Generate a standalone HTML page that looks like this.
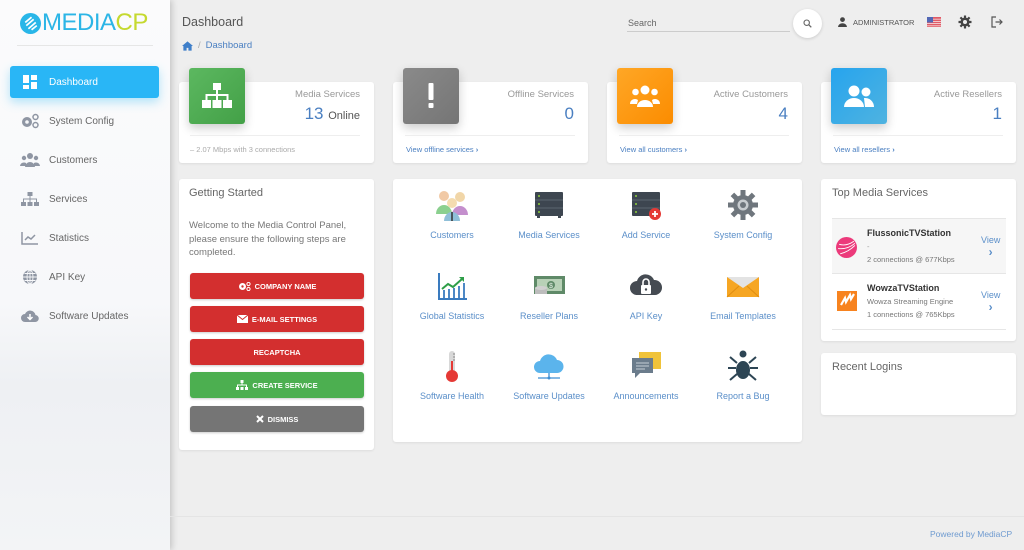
<!DOCTYPE html>
<html><head><meta charset="utf-8">
<style>
*{box-sizing:border-box;margin:0;padding:0}
body{width:1024px;height:550px;overflow:hidden;background:#eeeeee;font-family:"Liberation Sans",sans-serif;position:relative;color:#555}
.a{position:absolute}
.side{left:0;top:0;width:170px;height:550px;background:linear-gradient(180deg,#fbfbfc 0%,#f7f8fa 55%,#eef0f3 70%,#f3f4f6 100%);box-shadow:2px 0 6px rgba(0,0,0,.18)}
.nav{left:20px;font-size:10px;color:#666;display:flex;align-items:center}
.nav svg{width:20px;height:16px;margin-right:9px}
.card{background:#fff;border-radius:3px;box-shadow:0 1px 2px rgba(0,0,0,.08)}
.sq{width:56px;height:56px;border-radius:3px;box-shadow:0 4px 10px rgba(0,0,0,.2);display:flex;align-items:center;justify-content:center}
.lbl{font-size:9.5px;color:#999;text-align:right}
.num{font-size:17px;color:#4a7fc1;text-align:right}
.lnk{font-size:7.5px;color:#4a7fc1}
.hr{height:1px;background:#eee}
.btn{left:190px;width:174px;height:26px;border-radius:3px;color:#fff;font-size:7.5px;font-weight:bold;display:flex;align-items:center;justify-content:center;box-shadow:0 1px 2px rgba(0,0,0,.2)}
.red{background:#d32f2f}
.ic{width:102px;text-align:center;font-size:9px;color:#5b8fc9}
.ic svg{display:block;margin:0 auto 8px;width:34px;height:34px}
</style></head><body>
<div class="a side">
 <div class="a" style="left:20px;top:11px;display:flex;align-items:center">
  <svg width="21" height="21" viewBox="0 0 20 20"><circle cx="10" cy="10" r="10" fill="#29b6e8"/><path d="M5 9l6-5M6 12l7-6M8 15l7-6M11 16l5-4" stroke="#fff" stroke-width="1.6"/></svg>
  <span style="font-size:24px;letter-spacing:-0.5px;color:#2bb5e6;margin-left:1px;line-height:1">MEDIA<span style="color:#c5d92f">CP</span></span>
 </div>
 <div class="a" style="left:17px;top:45px;width:136px;height:1px;background:#e6e6e6"></div>
 <div class="a" style="left:10px;top:66px;width:149px;height:32px;background:#29b6f6;border-radius:3px;box-shadow:0 4px 10px rgba(41,182,246,.35)"></div>
 <div class="a nav" style="top:74px;color:#fff"><svg viewBox="0 0 20 16"><rect x="3" y="1" width="6" height="8" fill="#fff"/><rect x="11" y="1" width="6" height="5" fill="#fff"/><rect x="3" y="11" width="6" height="4" fill="#fff"/><rect x="11" y="8" width="6" height="7" fill="#fff"/></svg>Dashboard</div>
 <div class="a nav" style="top:113px"><svg viewBox="0 0 20 16"><circle cx="7" cy="9" r="5" fill="#8f96a3"/><circle cx="7" cy="9" r="1.8" fill="#f7f8fa"/><circle cx="15.5" cy="4" r="2.5" fill="none" stroke="#8f96a3" stroke-width="1.5"/><circle cx="15.5" cy="12" r="2.5" fill="none" stroke="#8f96a3" stroke-width="1.5"/></svg>System Config</div>
 <div class="a nav" style="top:152px"><svg viewBox="0 0 20 16"><circle cx="10" cy="4" r="3" fill="#8f96a3"/><circle cx="4" cy="6" r="2.2" fill="#8f96a3"/><circle cx="16" cy="6" r="2.2" fill="#8f96a3"/><path d="M5 15a5 5 0 0110 0z" fill="#8f96a3"/><path d="M0 14a4 4 0 016-3v3zM20 14a4 4 0 00-6-3v3z" fill="#8f96a3"/></svg>Customers</div>
 <div class="a nav" style="top:191px"><svg viewBox="0 0 20 16"><rect x="7.5" y="1" width="5" height="4" fill="#8f96a3"/><path d="M10 5v3M3.5 11V8h13v3M10 8v3" stroke="#8f96a3" fill="none"/><rect x="1" y="11" width="5" height="4" fill="#8f96a3"/><rect x="7.5" y="11" width="5" height="4" fill="#8f96a3"/><rect x="14" y="11" width="5" height="4" fill="#8f96a3"/></svg>Services</div>
 <div class="a nav" style="top:230px"><svg viewBox="0 0 20 16"><path d="M2 2v12h16" stroke="#8f96a3" stroke-width="1.5" fill="none"/><path d="M5 10l3-3 3 2 4-4" stroke="#8f96a3" stroke-width="1.5" fill="none"/></svg>Statistics</div>
 <div class="a nav" style="top:269px"><svg viewBox="0 0 20 16"><circle cx="10" cy="8" r="7" fill="#8f96a3"/><path d="M3 8h14M10 1v14M4.5 4.5h11M4.5 11.5h11" stroke="#f7f8fa" stroke-width=".9"/><ellipse cx="10" cy="8" rx="3" ry="7" fill="none" stroke="#f7f8fa" stroke-width=".9"/></svg>API Key</div>
 <div class="a nav" style="top:308px"><svg viewBox="0 0 20 16"><path d="M5 14a4 4 0 010-8 5.5 5.5 0 0110.5 1A3.5 3.5 0 0115 14z" fill="#8f96a3"/><path d="M10 6v5M7.5 9l2.5 2.5L12.5 9" stroke="#fff" stroke-width="1.5" fill="none"/></svg>Software Updates</div>
</div>

<div class="a" style="left:182px;top:15px;font-size:12.5px;color:#555">Dashboard</div>
<div class="a" style="left:182px;top:40px;font-size:9.5px;color:#aaa;display:flex;align-items:center">
 <svg width="11" height="10" viewBox="0 0 12 10"><path d="M6 0L0 5h1.5v5h3.5V7h2v3h3.5V5H12z" fill="#3f7fc9"/></svg>
 <span style="margin:0 5px">/</span><span style="color:#4a7fc1">Dashboard</span></div>

<div class="a" style="left:628px;top:18px;font-size:9px;color:#666">Search</div>
<div class="a" style="left:627px;top:31px;width:163px;height:1px;background:#ccc"></div>
<div class="a" style="left:793px;top:9px;width:29px;height:29px;border-radius:50%;background:#fff;box-shadow:0 1px 3px rgba(0,0,0,.15)"></div>
<svg class="a" style="left:803px;top:19px" width="9" height="9" viewBox="0 0 9 9"><circle cx="3.7" cy="3.7" r="2.7" fill="none" stroke="#666" stroke-width="1.1"/><path d="M5.7 5.7L8.3 8.3" stroke="#666" stroke-width="1.3"/></svg>
<svg class="a" style="left:838px;top:17px" width="9" height="10" viewBox="0 0 9 10"><circle cx="4.5" cy="2.6" r="2.4" fill="#444"/><path d="M0 10a4.5 3.8 0 019 0z" fill="#444"/></svg>
<div class="a" style="left:853px;top:18px;font-size:7.5px;color:#555">ADMINISTRATOR</div>
<svg class="a" style="left:927px;top:17px" width="14" height="10" viewBox="0 0 14 10"><rect width="14" height="10" fill="#e05a66"/><path d="M0 2.2h14M0 4.4h14M0 6.6h14M0 8.8h14" stroke="#f4d5d8" stroke-width=".9"/><rect width="6" height="5.5" fill="#5368b5"/></svg>
<svg class="a" style="left:958px;top:15px" width="14" height="14" viewBox="0 0 14 14"><circle cx="7" cy="7" r="4.5" fill="#444"/><path d="M7 0.5v13M0.5 7h13M2.4 2.4l9.2 9.2M11.6 2.4l-9.2 9.2" stroke="#444" stroke-width="2.2"/><circle cx="7" cy="7" r="2" fill="#eee"/></svg>
<svg class="a" style="left:991px;top:16px" width="12" height="12" viewBox="0 0 12 12"><path d="M5 1H1v10h4" stroke="#555" fill="none" stroke-width="1.2"/><path d="M4.5 6h6.5M8.5 3.5L11 6 8.5 8.5" stroke="#555" fill="none" stroke-width="1.2"/></svg>

<div class="a card" style="left:179px;top:82px;width:195px;height:81px"></div>
<div class="a card" style="left:393px;top:82px;width:195px;height:81px"></div>
<div class="a card" style="left:607px;top:82px;width:195px;height:81px"></div>
<div class="a card" style="left:821px;top:82px;width:195px;height:81px"></div>
<div class="a sq" style="left:189px;top:68px;background:linear-gradient(135deg,#5cb860,#43a047)"><svg width="30" height="26" viewBox="0 0 30 26"><rect x="11" y="0" width="8" height="7" fill="#fff"/><path d="M15 7v5M4.5 17v-5h21v5M15 12v5" stroke="#fff" stroke-width="2" fill="none"/><rect x="0" y="17" width="9" height="8" fill="#fff"/><rect x="10.5" y="17" width="9" height="8" fill="#fff"/><rect x="21" y="17" width="9" height="8" fill="#fff"/></svg></div>
<div class="a sq" style="left:403px;top:68px;background:linear-gradient(135deg,#8a8a8a,#757575)"><svg width="10" height="26" viewBox="0 0 10 26"><rect x="2.5" y="0" width="5" height="17" rx="1" fill="#fff"/><rect x="2.5" y="20" width="5" height="5" rx="1" fill="#fff"/></svg></div>
<div class="a sq" style="left:617px;top:68px;background:linear-gradient(135deg,#ffa726,#fb8c00)"><svg width="30" height="22" viewBox="0 0 30 22"><circle cx="15" cy="5" r="4.5" fill="#fff"/><circle cx="5.5" cy="7" r="3.3" fill="#fff"/><circle cx="24.5" cy="7" r="3.3" fill="#fff"/><path d="M7 22a8 7 0 0116 0z" fill="#fff"/><path d="M0 19a5 5 0 018-4l-1 4zM30 19a5 5 0 00-8-4l1 4z" fill="#fff"/></svg></div>
<div class="a sq" style="left:831px;top:68px;background:linear-gradient(135deg,#26a4ee,#4fb3e0)"><svg width="30" height="22" viewBox="0 0 30 22"><circle cx="10" cy="6" r="5.5" fill="#fff"/><path d="M0 22a10 9 0 0120 0z" fill="#fff"/><circle cx="22" cy="7" r="4.5" fill="#fff"/><path d="M20 13a9 9 0 0110 9h-9z" fill="#fff"/></svg></div>

<div class="a lbl" style="left:260px;top:89px;width:100px">Media Services</div>
<div class="a num" style="left:260px;top:104px;width:100px">13 <span style="font-size:11px;color:#555">Online</span></div>
<div class="a hr" style="left:190px;top:135px;width:170px"></div>
<div class="a" style="left:190px;top:145px;font-size:7.5px;color:#aaa">– 2.07 Mbps with 3 connections</div>

<div class="a lbl" style="left:474px;top:89px;width:100px">Offline Services</div>
<div class="a num" style="left:474px;top:104px;width:100px">0</div>
<div class="a hr" style="left:405px;top:135px;width:170px"></div>
<div class="a lnk" style="left:406px;top:145px">View offline services <b>›</b></div>

<div class="a lbl" style="left:688px;top:89px;width:100px">Active Customers</div>
<div class="a num" style="left:688px;top:104px;width:100px">4</div>
<div class="a hr" style="left:619px;top:135px;width:170px"></div>
<div class="a lnk" style="left:620px;top:145px">View all customers <b>›</b></div>

<div class="a lbl" style="left:902px;top:89px;width:100px">Active Resellers</div>
<div class="a num" style="left:902px;top:104px;width:100px">1</div>
<div class="a hr" style="left:833px;top:135px;width:170px"></div>
<div class="a lnk" style="left:834px;top:145px">View all resellers <b>›</b></div>

<div class="a card" style="left:179px;top:179px;width:195px;height:271px"></div>
<div class="a" style="left:189px;top:187px;font-size:11px;color:#666">Getting Started</div>
<div class="a" style="left:189px;top:219px;width:174px;font-size:9.5px;line-height:13.5px;color:#777">Welcome to the Media Control Panel, please ensure the following steps are completed.</div>
<div class="a btn red" style="top:273px"><svg width="13" height="9" viewBox="0 0 13 9" style="margin-right:4px"><circle cx="4.5" cy="4.5" r="3.5" fill="#fff"/><circle cx="4.5" cy="4.5" r="1.2" fill="#d32f2f"/><circle cx="10.5" cy="2" r="1.6" fill="none" stroke="#fff"/><circle cx="10.5" cy="7" r="1.6" fill="none" stroke="#fff"/></svg>COMPANY NAME</div>
<div class="a btn red" style="top:306px"><svg width="11" height="8" viewBox="0 0 11 8" style="margin-right:4px"><rect width="11" height="8" fill="#fff"/><path d="M0 0l5.5 4.5L11 0" stroke="#d32f2f" fill="none"/></svg>E-MAIL SETTINGS</div>
<div class="a btn red" style="top:339px">RECAPTCHA</div>
<div class="a btn" style="top:372px;background:#4caf50"><svg width="12" height="10" viewBox="0 0 12 10" style="margin-right:4px"><rect x="4.5" y="0" width="3" height="3" fill="#fff"/><path d="M6 3v2M1.5 7V5h9v2" stroke="#fff" fill="none"/><rect x="0" y="7" width="3" height="3" fill="#fff"/><rect x="4.5" y="7" width="3" height="3" fill="#fff"/><rect x="9" y="7" width="3" height="3" fill="#fff"/></svg>CREATE SERVICE</div>
<div class="a btn" style="top:406px;background:#757575"><svg width="8" height="8" viewBox="0 0 8 8" style="margin-right:4px"><path d="M1 1l6 6M7 1L1 7" stroke="#fff" stroke-width="2"/></svg>DISMISS</div>

<div class="a card" style="left:393px;top:179px;width:409px;height:263px"></div>
<div class="a ic" style="left:401px;top:188px"><svg viewBox="0 0 34 34"><circle cx="9" cy="8" r="5" fill="#f1c9a5"/><path d="M1 26a8 9 0 0116 0z" fill="#8bd08f"/><circle cx="25" cy="9" r="5" fill="#f1d6a8"/><path d="M17 27a8 9 0 0116 0z" fill="#c48fcd"/><circle cx="17" cy="15" r="5" fill="#f4dcb0"/><path d="M9 33a8 9 0 0116 0z" fill="#8fbfd8"/><path d="M17 24v9" stroke="#333" stroke-width="1.5"/></svg>Customers</div>
<div class="a ic" style="left:498px;top:188px"><svg viewBox="0 0 34 34"><rect x="3" y="4" width="28" height="24" rx="1" fill="#3d4650"/><path d="M3 12h28M3 20h28" stroke="#5c6670"/><circle cx="7" cy="8" r="1" fill="#8ecf3c"/><circle cx="7" cy="16" r="1" fill="#8ecf3c"/><circle cx="7" cy="24" r="1" fill="#8ecf3c"/><rect x="5" y="28" width="3" height="2" fill="#3d4650"/><rect x="26" y="28" width="3" height="2" fill="#3d4650"/></svg>Media Services</div>
<div class="a ic" style="left:595px;top:188px"><svg viewBox="0 0 34 34"><rect x="3" y="4" width="28" height="24" rx="1" fill="#3d4650"/><path d="M3 12h28M3 20h28" stroke="#5c6670"/><circle cx="7" cy="8" r="1" fill="#8ecf3c"/><circle cx="7" cy="16" r="1" fill="#8ecf3c"/><circle cx="7" cy="24" r="1" fill="#8ecf3c"/><circle cx="26" cy="26" r="6" fill="#e53935"/><path d="M26 23v6M23 26h6" stroke="#fff" stroke-width="1.8"/></svg>Add Service</div>
<div class="a ic" style="left:692px;top:188px"><svg viewBox="0 0 34 34"><circle cx="17" cy="17" r="10" fill="#6f767d"/><path d="M17 2v30M2 17h30M6.4 6.4l21.2 21.2M27.6 6.4L6.4 27.6" stroke="#6f767d" stroke-width="5"/><circle cx="17" cy="17" r="5.5" fill="#c8ccd0"/><circle cx="17" cy="17" r="3" fill="#6f767d"/></svg>System Config</div>

<div class="a ic" style="left:401px;top:269px"><svg viewBox="0 0 34 34"><path d="M4 4v26h28" stroke="#3a7bbf" stroke-width="2" fill="none"/><path d="M9 29V21M14 29v-9M19 29v-10M24 29v-12M29 29V14" stroke="#3a7bbf" stroke-width="1.8"/><path d="M7 20l6-5 5 3 9-8" stroke="#2e9e48" stroke-width="2" fill="none"/><path d="M24 8h5v5z" fill="#2e9e48"/></svg>Global Statistics</div>
<div class="a ic" style="left:498px;top:269px"><svg viewBox="0 0 34 34"><rect x="2" y="7" width="31" height="18" fill="#5f8a68"/><rect x="5" y="10" width="25" height="12" fill="#b8d1b7"/><circle cx="19" cy="16" r="4" fill="#5f8a68"/><text x="19" y="19" font-size="7" text-anchor="middle" fill="#e5efe4" font-family="Liberation Sans">$</text><ellipse cx="9" cy="23" rx="6" ry="2" fill="#b3b3b3"/><rect x="3" y="19" width="12" height="6" fill="#bdbdbd"/><ellipse cx="9" cy="19" rx="6" ry="2" fill="#d0d0d0"/></svg>Reseller Plans</div>
<div class="a ic" style="left:595px;top:269px"><svg viewBox="0 0 34 34"><path d="M8 26a7 7 0 010-14 9 9 0 0117-1 7.5 7.5 0 011 15z" fill="#454b52"/><rect x="12" y="16" width="10" height="9" rx="1" fill="#fff"/><path d="M14 16v-3a3 3 0 016 0v3" stroke="#fff" stroke-width="1.6" fill="none"/><circle cx="17" cy="20.5" r="1.2" fill="#454b52"/></svg>API Key</div>
<div class="a ic" style="left:692px;top:269px"><svg viewBox="0 0 34 34"><rect x="1" y="8" width="32" height="20" fill="#f6a623"/><path d="M1 8l16 11L33 8z" fill="#e3e3e3"/><path d="M1 28l12-11M33 28L21 17" stroke="#e08e12"/></svg>Email Templates</div>

<div class="a ic" style="left:401px;top:349px"><svg viewBox="0 0 34 34"><rect x="14" y="2" width="6" height="22" rx="3" fill="#d8d8d8"/><rect x="16" y="12" width="2" height="12" fill="#e53935"/><circle cx="17" cy="27" r="6" fill="#e53935"/><path d="M20 5h-2M20 8h-2M20 11h-2" stroke="#888"/></svg>Software Health</div>
<div class="a ic" style="left:498px;top:349px"><svg viewBox="0 0 34 34"><path d="M8 24a6 6 0 010-12 9 9 0 0117-1 6.5 6.5 0 010 13z" fill="#5bb4ec"/><path d="M17 24v5M6 29h22" stroke="#3f8fd4" stroke-width="1.3"/><circle cx="17" cy="29" r="1.5" fill="#3f8fd4"/></svg>Software Updates</div>
<div class="a ic" style="left:595px;top:349px"><svg viewBox="0 0 34 34"><rect x="10" y="3" width="22" height="17" fill="#f0c33a"/><path d="M3 9h21v15H11l-5 5v-5H3z" fill="#6b7c8c"/><path d="M7 14h13M7 17h13M7 20h9" stroke="#c5ced6"/></svg>Announcements</div>
<div class="a ic" style="left:692px;top:349px"><svg viewBox="0 0 34 34"><circle cx="17" cy="5" r="3.5" fill="#2d4554"/><ellipse cx="17" cy="21" rx="7" ry="9" fill="#2d4554"/><path d="M11 14L4 8M23 14l7-6M10 19H2M24 19h8M11 25l-7 6M23 25l7 6" stroke="#2d4554" stroke-width="2"/></svg>Report a Bug</div>

<div class="a card" style="left:821px;top:179px;width:195px;height:162px"></div>
<div class="a" style="left:832px;top:187px;font-size:11px;color:#666">Top Media Services</div>
<div class="a" style="left:832px;top:218px;width:174px;height:56px;background:#f6f6f6;border-top:1px solid #e6e6e6;border-bottom:1px solid #e6e6e6"></div>
<div class="a" style="left:832px;top:329px;width:174px;height:1px;background:#e6e6e6"></div>
<svg class="a" style="left:836px;top:237px" width="21" height="21" viewBox="0 0 20 20"><circle cx="10" cy="10" r="10" fill="#ec3a7b"/><path d="M3 7q7 2 14-3M2 11q9 1 16-5M4 16q8-2 14-8" stroke="#fff" stroke-width=".9" fill="none"/></svg>
<div class="a" style="left:867px;top:228px;font-size:9px;font-weight:bold;color:#333">FlussonicTVStation</div>
<div class="a" style="left:867px;top:242px;font-size:7.5px;color:#999">-</div>
<div class="a" style="left:867px;top:255px;font-size:7.5px;color:#777">2 connections @ 677Kbps</div>
<div class="a" style="left:981px;top:235px;font-size:9px;color:#5b8fc9;text-align:center">View<br><b style="font-size:12px">›</b></div>
<svg class="a" style="left:837px;top:291px" width="20" height="20" viewBox="0 0 20 20"><rect width="20" height="20" fill="#f7831f"/><path d="M4 14l4-7 1 4 4-7 1 4 3-5" stroke="#fff" stroke-width="2.2" fill="none"/></svg>
<div class="a" style="left:867px;top:283px;font-size:9px;font-weight:bold;color:#333">WowzaTVStation</div>
<div class="a" style="left:867px;top:297px;font-size:7.5px;color:#777">Wowza Streaming Engine</div>
<div class="a" style="left:867px;top:310px;font-size:7.5px;color:#777">1 connections @ 765Kbps</div>
<div class="a" style="left:981px;top:290px;font-size:9px;color:#5b8fc9;text-align:center">View<br><b style="font-size:12px">›</b></div>

<div class="a card" style="left:821px;top:353px;width:195px;height:62px"></div>
<div class="a" style="left:832px;top:361px;font-size:11px;color:#666">Recent Logins</div>

<div class="a" style="left:170px;top:516px;width:854px;height:1px;background:#e4e4e4"></div>
<div class="a" style="left:930px;top:529px;font-size:8.5px;color:#6f9bd0">Powered by MediaCP</div>
</body></html>
